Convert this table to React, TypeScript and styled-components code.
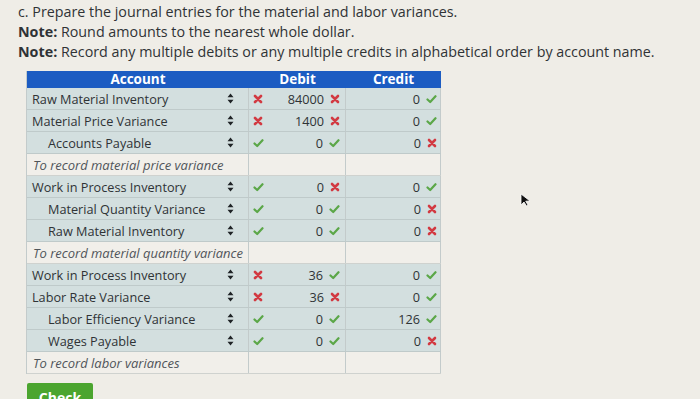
import React from "react";
import styled, { createGlobalStyle } from "styled-components";

//------------------------------------------------------

const GlobalStyle = createGlobalStyle`
  body {
    margin: 0;
    background: #efede7;
    font-family: "Open Sans", "Liberation Sans", sans-serif;
    color: #2f3336;
  }
`;

const Page = styled.div`
  position: relative;
  width: 700px;
  height: 399px;
  overflow: hidden;
  padding: 2px 0 0 18px;
  box-sizing: border-box;
`;

const Line = styled.div`
  font-size: 14.3px;
  line-height: 20px;
  height: 20px;
  white-space: nowrap;
  b {
    font-weight: 700;
  }
`;

const Table = styled.div`
  margin: 9px 0 0 8px;
  width: 414px;
  border-left: 1px solid #c3cbcb;
`;

const Row = styled.div<{ $memo?: boolean }>`
  display: grid;
  grid-template-columns: 222px 97px 95px;
  height: 22px;
  background: ${p => (p.$memo ? "#f1efea" : "#d3dfdf")};
  border-bottom: 1px solid ${p => (p.$memo ? "#cfd2cf" : "#bfcaca")};
  box-sizing: border-box;
  font-size: 12.7px;
`;

const Head = styled.div`
  display: grid;
  grid-template-columns: 222px 97px 95px;
  height: 17px;
  background: #1c5cc2;
  color: #fff;
  font-weight: 700;
  font-size: 13.5px;
  line-height: 17px;
  text-align: center;
`;

const Cell = styled.div`
  display: flex;
  align-items: center;
  border-right: 1px solid #c3cbcb;
  box-sizing: border-box;
  min-width: 0;
`;

const AccountCell = styled(Cell)<{ $indent?: boolean }>`
  padding: 0 14px 0 ${p => (p.$indent ? 21 : 5)}px;
  justify-content: space-between;
  white-space: nowrap;
`;

const MemoCell = styled(Cell)`
  padding-left: 6px;
  font-style: italic;
  font-size: 13px;
  color: #50555a;
  white-space: nowrap;
`;

const AmountCell = styled(Cell)<{ $pad: number }>`
  padding: 0 ${p => p.$pad}px 0 4px;
  justify-content: space-between;
`;

const Amount = styled.span`
  display: flex;
  align-items: center;
  gap: 6px;
`;

const Empty = styled(Cell)``;

const CheckButton = styled.div`
  margin: 9px 0 0 9px;
  width: 66px;
  height: 30px;
  background: #4ba52f;
  border-radius: 2px;
  color: #fff;
  font-weight: 700;
  font-size: 14px;
  text-align: center;
  line-height: 30px;
`;

const Cursor = styled.svg`
  position: absolute;
  left: 520px;
  top: 193px;
`;

//------------------------------------------------------

type mark = "x" | "ok";

type entry = {
  account?: string;
  indent?: boolean;
  acct?: mark;
  debit?: string;
  dm?: mark;
  credit?: string;
  cm?: mark;
  memo?: string;
};

const entries: entry[] = [
  { account: "Raw Material Inventory", acct: "x", debit: "84000", dm: "x", credit: "0", cm: "ok" },
  { account: "Material Price Variance", acct: "x", debit: "1400", dm: "x", credit: "0", cm: "ok" },
  { account: "Accounts Payable", indent: true, acct: "ok", debit: "0", dm: "ok", credit: "0", cm: "x" },
  { memo: "To record material price variance" },
  { account: "Work in Process Inventory", acct: "ok", debit: "0", dm: "x", credit: "0", cm: "ok" },
  { account: "Material Quantity Variance", indent: true, acct: "ok", debit: "0", dm: "ok", credit: "0", cm: "x" },
  { account: "Raw Material Inventory", indent: true, acct: "ok", debit: "0", dm: "ok", credit: "0", cm: "x" },
  { memo: "To record material quantity variance" },
  { account: "Work in Process Inventory", acct: "x", debit: "36", dm: "ok", credit: "0", cm: "ok" },
  { account: "Labor Rate Variance", acct: "x", debit: "36", dm: "x", credit: "0", cm: "ok" },
  { account: "Labor Efficiency Variance", indent: true, acct: "ok", debit: "0", dm: "ok", credit: "126", cm: "ok" },
  { account: "Wages Payable", indent: true, acct: "ok", debit: "0", dm: "ok", credit: "0", cm: "x" },
  { memo: "To record labor variances" },
];

const Mark = ({ kind }: { kind?: mark }) => {
  if (!kind) return <span style={{ width: 10 }} />;
  if (kind === "x") {
    return (
      <svg width="10" height="10" viewBox="0 0 10 10">
        <path d="M2 2 L8 8 M8 2 L2 8" stroke="#d23a42" strokeWidth="2.6" strokeLinecap="round" />
      </svg>
    );
  }
  return (
    <svg width="11" height="10" viewBox="0 0 11 10">
      <path d="M1.5 5.5 L4.2 8 L9.5 2.2" fill="none" stroke="#5ba748" strokeWidth="2.2" strokeLinecap="round" strokeLinejoin="round" />
    </svg>
  );
};

const SortIcon = () => (
  <svg width="7" height="11" viewBox="0 0 7 11">
    <path d="M3.5 0.5 L6.5 4.3 L0.5 4.3 Z M3.5 10.5 L6.5 6.7 L0.5 6.7 Z" fill="#1f2326" />
  </svg>
);

const JournalRow = ({ e }: { e: entry }) => {
  if (e.memo) {
    return (
      <Row $memo>
        <MemoCell>{e.memo}</MemoCell>
        <Empty />
        <Empty />
      </Row>
    );
  }
  return (
    <Row>
      <AccountCell $indent={e.indent}>
        <span>{e.account}</span>
        <SortIcon />
      </AccountCell>
      <AmountCell $pad={5}>
        <Mark kind={e.acct} />
        <Amount>
          {e.debit}
          <Mark kind={e.dm} />
        </Amount>
      </AmountCell>
      <AmountCell $pad={3}>
        <span />
        <Amount>
          {e.credit}
          <Mark kind={e.cm} />
        </Amount>
      </AmountCell>
    </Row>
  );
};

export default function App() {
  return (
    <Page>
      <GlobalStyle />
      <Line>c. Prepare the journal entries for the material and labor variances.</Line>
      <Line>
        <b>Note:</b> Round amounts to the nearest whole dollar.
      </Line>
      <Line>
        <b>Note:</b> Record any multiple debits or any multiple credits in alphabetical order by account name.
      </Line>
      <Table>
        <Head>
          <div>Account</div>
          <div>Debit</div>
          <div>Credit</div>
        </Head>
        {entries.map((e, i) => (
          <JournalRow key={i} e={e} />
        ))}
      </Table>
      <CheckButton>Check</CheckButton>
      <Cursor width="12" height="14" viewBox="0 0 12 14">
        <path d="M1 1 L1 12 L4 9 L6.5 13 L8 12 L5.7 8.2 L10 8 Z" fill="#111" stroke="#fff" strokeWidth="0.8" />
      </Cursor>
    </Page>
  );
}
